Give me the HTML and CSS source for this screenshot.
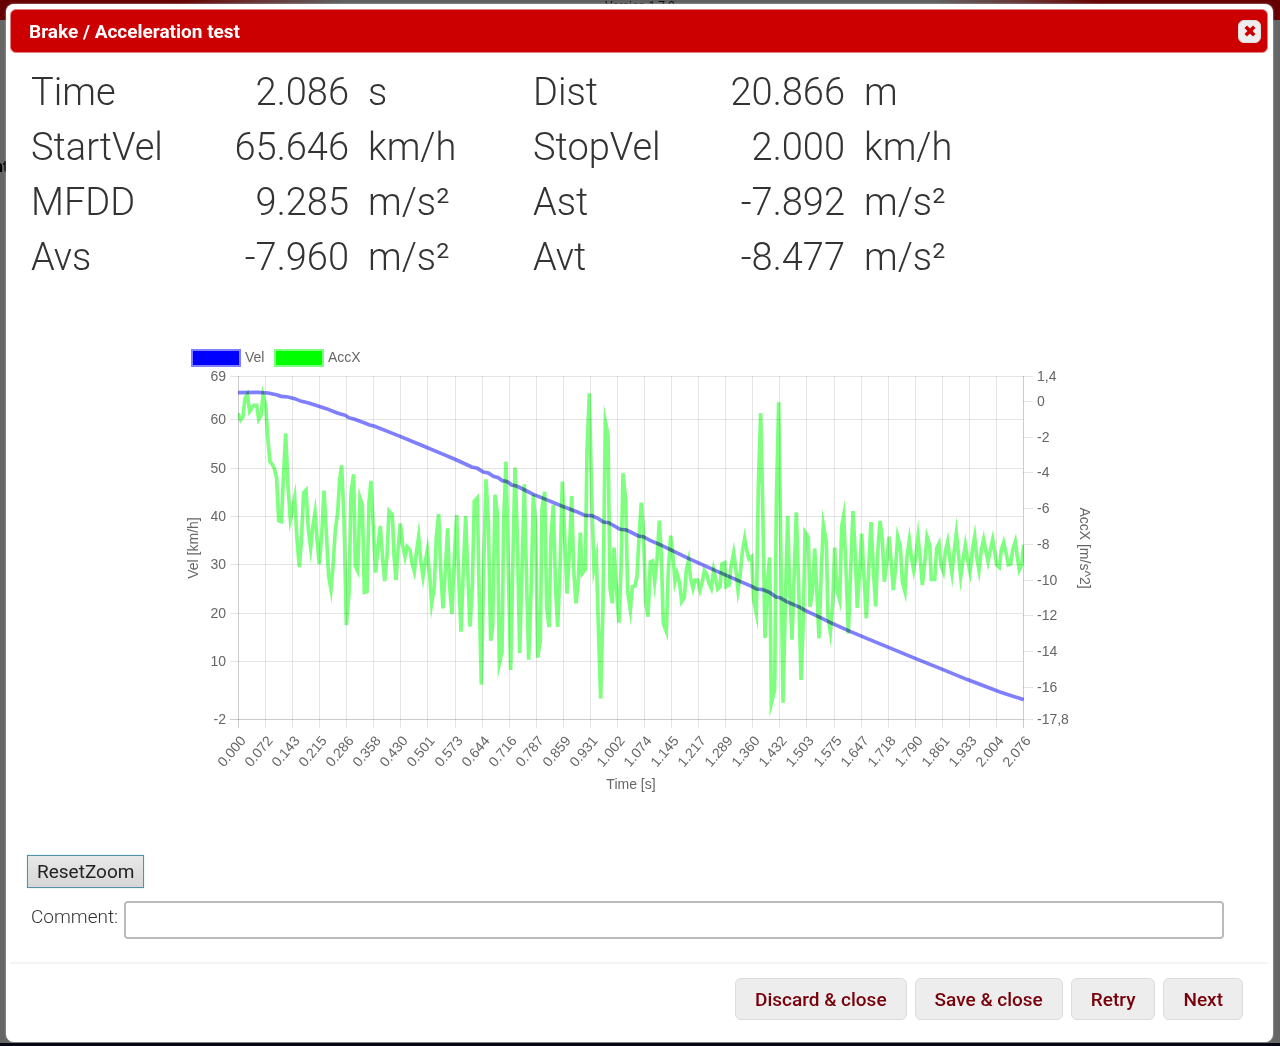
FILE: index.html
```html
<!DOCTYPE html>
<html lang="en">
<head>
  <meta charset="UTF-8">
  <meta name="viewport" content="width=device-width, initial-scale=1.0">
  <title>Brake / Acceleration test</title>
  <link rel="stylesheet" href="styles.css">
</head>
<body>
  <div class="page-header"></div>
  <div class="page-version">Version 1.7.9</div>
  <div class="page-label">nt</div>

  <div class="dialog" role="dialog" aria-labelledby="dialogTitle">
    <div class="titlebar">
      <h1 id="dialogTitle">Brake / Acceleration test</h1>
      <button class="close" aria-label="Close">
        <svg width="12" height="12" viewBox="0 0 12 12"><path d="M3 3L9 9M9 3L3 9" stroke="#c00" stroke-width="3.6" stroke-linecap="square"/></svg>
      </button>
    </div>

    <div class="content">
      <table class="results">
        <tr><th>Time</th><td class="value">2.086</td><td class="unit">s</td><th>Dist</th><td class="value second">20.866</td><td class="unit">m</td></tr>
        <tr><th>StartVel</th><td class="value">65.646</td><td class="unit">km/h</td><th>StopVel</th><td class="value second">2.000</td><td class="unit">km/h</td></tr>
        <tr><th>MFDD</th><td class="value">9.285</td><td class="unit">m/s²</td><th>Ast</th><td class="value second">-7.892</td><td class="unit">m/s²</td></tr>
        <tr><th>Avs</th><td class="value">-7.960</td><td class="unit">m/s²</td><th>Avt</th><td class="value second">-8.477</td><td class="unit">m/s²</td></tr>
      </table>

      <svg class="chart" viewBox="0 0 912 460">
        <!-- legend -->
        <rect x="8" y="10" width="48" height="16" fill="#00f" stroke="#7f7fff" stroke-width="2"/>
        <text x="61" y="22">Vel</text>
        <rect x="91" y="10" width="48" height="16" fill="#0f0" stroke="#7fff7f" stroke-width="2"/>
        <text x="144" y="22">AccX</text>

        <g id="grid"></g>

        <!-- plot area, three units per pixel -->
        <svg x="54" y="36" width="786" height="344" viewBox="0 0 2358 1032">
          <polyline class="line acc" points="0,112 8,132 15,122 21,67 28,56 35,106 42,95 48,88 56,88 62,130 69,118 75,58 83,87 89,182 96,258 102,264 109,277 116,307 122,434 130,437 137,290 143,172 150,330 157,430 163,402 170,365 177,490 184,573 190,495 197,350 204,342 211,460 218,515 224,455 231,410 238,500 244,564 251,480 258,344 265,470 272,600 279,640 285,572 292,462 299,410 305,312 311,268 318,430 325,747 333,650 339,350 347,295 352,570 359,585 366,365 373,387 379,649 387,647 393,380 399,315 405,440 413,590 421,500 427,450 434,550 440,615 447,540 453,405 463,417
            468,537 474,612 480,522 487,442 494,507 501,542 507,512 516,522 522,562 529,587 535,532 542,482 548,552 555,602 561,562 568,522 575,597 581,682 589,632 595,482 602,414 608,582 615,697 622,582 629,457 635,632 642,714 649,542 656,417 662,602 669,767 676,582 683,420 689,582 696,752 703,632 709,376 718,366 723,632 730,926 737,582 744,310 751,432 758,794 764,752 771,356 778,412 784,862 792,827 797,432 804,257 811,582 818,882 824,582 831,275 838,482 845,831 852,582 859,325 865,582 872,851 880,622 886,356 893,452 899,845 907,792 912,397 920,347 926,692 933,753 939,482 946,387 953,642 959,753 966,582 973,317 980,482 987,653 994,532 1001,360 1007,582 1014,682 1021,612 1027,470 1033,592 1042,580 1047,222 1054,52 1061,362 1068,577
            1075,542 1082,782 1088,968 1095,682 1102,137 1110,177 1116,637 1123,682 1128,515 1135,632 1143,740 1149,582 1155,292 1163,372 1169,647 1177,702 1183,632 1191,630 1197,602 1203,482 1210,380 1216,462 1223,677 1230,722 1237,558 1244,555 1250,617 1257,552 1264,434 1270,542 1276,742 1285,767 1291,582 1298,479 1305,542 1311,617 1317,592 1325,622 1331,677 1339,665 1345,582 1352,552 1358,607 1365,637 1371,612 1379,612 1386,642 1393,617 1399,584 1406,594 1413,622 1420,637 1427,582 1433,607 1439,639 1446,632 1452,564 1460,560 1464,632 1473,627 1479,572 1487,530 1494,582 1500,642 1506,602 1513,527 1520,487 1527,527 1533,549 1541,542 1547,672 1555,712 1561,332 1568,111 1574,382 1581,786 1588,622 1595,544 1600,982 1610,942 1615,382 1622,79 1628,482 1635,980 1642,682 1649,420 1655,632 1662,791 1669,582 1675,409
            1682,632 1689,912 1696,732 1701,469 1711,485 1716,692 1723,652 1730,518 1736,632 1743,787 1750,582 1756,447 1765,497 1770,722 1777,768 1784,682 1790,515 1797,642 1805,672 1811,452 1817,419 1824,582 1831,772 1838,582 1845,405 1851,522 1858,696 1865,582 1871,473 1878,602 1885,727 1892,582 1899,438 1906,582 1913,691 1919,532 1926,435 1933,492 1939,617 1946,562 1953,482 1959,552 1966,642 1973,572 1979,482 1987,512 1993,617 2001,647 2007,542 2014,492 2020,542 2027,582 2034,537 2040,482
            2047,552 2053,627 2060,562 2067,482 2075,507 2080,610 2090,610 2096,517 2103,502 2109,567 2116,587 2122,527 2129,497 2136,552 2142,592 2149,522 2155,472 2162,542 2168,602 2175,552 2182,507 2189,552 2196,587 2203,522 2210,482 2216,542 2223,582 2230,522 2237,490 2244,527 2250,557 2257,522 2264,490 2270,527 2276,567 2284,574 2290,522 2297,500 2304,530 2311,567 2318,565 2324,522 2332,497 2338,542 2344,582 2351,567 2357,507"/>
          <polyline class="line vel" points="0,50 60,49 90,51 115,56 130,61 150,63 170,68 190,76 210,80 240,90 265,98 290,108 305,113 322,118 332,125 350,130 380,141 395,147 410,151 456,169 488,182 556,210 616,235 656,252 701,273 718,277 736,288 751,291 766,301 781,305 793,314 808,317 821,327 836,330 866,345 886,355 916,367 971,390 1016,407 1041,418 1061,419 1081,428 1096,438 1112,440 1146,460 1166,462 1201,480 1216,482 1236,493 1266,506 1351,547 1426,581 1506,616 1541,631 1556,639 1574,641 1596,650 1614,663 1626,665 1646,677 1686,694 1701,703 1746,724 1776,739 1831,764 1886,787 1946,812 2046,853 2106,877 2186,910 2286,948 2357,971"/>
        </svg>

        <text x="447" y="449" text-anchor="middle">Time [s]</text>
        <text transform="translate(14 208) rotate(-90)" text-anchor="middle">Vel [km/h]</text>
        <text transform="translate(896 208) rotate(90)" text-anchor="middle">AccX [m/s^2]</text>
      </svg>

      <button class="reset">ResetZoom</button>
      <div class="comment">
        <label for="comment">Comment:</label>
        <input type="text" id="comment">
      </div>
    </div>

    <div class="buttons">
      <button>Discard &amp; close</button>
      <button>Save &amp; close</button>
      <button>Retry</button>
      <button>Next</button>
    </div>
  </div>

  <script>
    const plot = { left: 54, top: 36, right: 839, bottom: 379 };
    const velTicks = [69, 60, 50, 40, 30, 20, 10, -2];
    const accTicks = [1.4, 0, -2, -4, -6, -8, -10, -12, -14, -16, -17.8];
    const timeTicks = 30;
    const timeStep = 0.071588;

    function line(x1, y1, x2, y2, cls) {
      return `<line class="${cls}" x1="${x1}" y1="${y1}" x2="${x2}" y2="${y2}"/>`;
    }

    // Position of a value on a vertical axis
    function scaleY(value, max, min) {
      return Math.round(plot.top + (max - value) / (max - min) * (plot.bottom - plot.top)) + 0.5;
    }

    function drawGrid() {
      let out = "";

      velTicks.forEach(v => {
        const y = scaleY(v, 69, -2);
        out += line(plot.left - 8, y, plot.right, y, v === -2 ? "axis" : "tick");
        out += `<text x="42" y="${y + 4}" text-anchor="end">${v}</text>`;
      });

      accTicks.forEach(v => {
        const y = scaleY(v, 1.4, -17.8);
        out += line(plot.right, y, plot.right + 10, y, "tick");
        out += `<text x="853" y="${y + 4}">${String(v).replace(".", ",")}</text>`;
      });

      for (let i = 0; i < timeTicks; i++) {
        const x = Math.round(plot.left + i * (plot.right - plot.left) / (timeTicks - 1)) + 0.5;
        const edge = i === 0 || i === timeTicks - 1;
        out += line(x, plot.top, x, plot.bottom + 9, edge ? "axis" : "tick");
        out += `<text transform="translate(${x + 8} ${plot.bottom + 22}) rotate(-50)" text-anchor="end">${(i * timeStep).toFixed(3)}</text>`;
      }

      document.getElementById("grid").innerHTML = out;
    }

    drawGrid();
  </script>
</body>
</html>
```
FILE: styles.css
```css
* {
  box-sizing: border-box;
}
body {
  margin: 0;
  min-height: 100vh;
  padding: 4px 7px 1px 6px;
  position: relative;
  overflow: hidden;
  font-family: Roboto, "Liberation Sans", sans-serif;
  color: #333;
  background: #666;
  border-bottom: 3px solid #05060f;
  display: flex;
}
.page-header {
  position: absolute;
  top: 0;
  left: 0;
  right: 0;
  height: 20px;
  background: linear-gradient(90deg, #600 14%, #633 20%, #606060 27%, #606060 73%, #633 80%, #600 86%);
}
.page-version {
  position: absolute;
  top: 0;
  left: 0;
  right: 0;
  text-align: center;
  font-size: 12px;
  line-height: 12px;
  color: #111;
}
.page-label {
  position: absolute;
  top: 157px;
  left: -6px;
  font-size: 16px;
  font-weight: bold;
  color: #000;
}
.dialog {
  position: relative;
  flex: 1;
  display: flex;
  flex-direction: column;
  padding: 5px 5px 5px 4px;
  background: #fff;
  border-radius: 8px;
  box-shadow: 0 0 2px #ccd;
}
.titlebar {
  display: flex;
  align-items: center;
  justify-content: space-between;
  height: 44px;
  padding: 0 6px 0 18px;
  background: #c00;
  border: 1px solid #e08080;
  border-radius: 6px;
}
.titlebar h1 {
  margin: 0;
  font-size: 19px;
  font-weight: 700;
  color: #fff;
}
.close {
  display: flex;
  align-items: center;
  justify-content: center;
  width: 23px;
  height: 23px;
  padding: 0;
  background: #eee;
  border: 1px solid #ddd;
  border-radius: 6px;
}
.content {
  flex: 1;
  display: flex;
  flex-direction: column;
  padding: 12px 44px 23px 17px;
}
.results {
  align-self: flex-start;
  border-collapse: collapse;
  font-size: 38px;
  line-height: 55px;
  font-weight: 300;
}
.results th,
.results td {
  padding: 0;
  font-weight: 300;
  text-align: left;
}
.results th {
  width: 166px;
  padding-left: 4px;
}
.results .value {
  width: 156px;
  text-align: right;
}
.results .second {
  width: 150px;
}
.results .unit {
  width: 180px;
  padding-left: 19px;
}
.chart {
  width: 100%;
  max-width: 912px;
  margin: 55px 0 0 157px;
}
.chart text {
  font-family: "Liberation Sans", Arial, sans-serif;
  font-size: 14px;
  fill: #666;
}
.tick {
  stroke: rgba(0, 0, 0, 0.1);
}
.axis {
  stroke: rgba(0, 0, 0, 0.2);
}
.line {
  fill: none;
  stroke-width: 11;
  stroke-miterlimit: 10;
  mix-blend-mode: multiply;
}
.acc {
  stroke: #7fff7f;
}
.vel {
  stroke: #7f7fff;
}
.reset {
  align-self: flex-start;
  height: 33px;
  margin-top: 55px;
  padding: 0 9px;
  font-family: inherit;
  font-size: 19px;
  font-weight: 400;
  color: #222;
  background: linear-gradient(#e8e8e8, #d6d6d6);
  border: 1px solid #5590a8;
  box-shadow: 0 0 1px #8cd;
}
.comment {
  display: flex;
  gap: 6px;
  margin-top: 13px;
  padding-left: 4px;
  font-size: 19px;
  line-height: 32px;
  font-weight: 300;
}
.comment input {
  flex: 1;
  height: 38px;
  padding: 0 8px;
  font: inherit;
  border: 2px solid #bbb;
  border-radius: 4px;
}
.buttons {
  display: flex;
  justify-content: flex-end;
  gap: 8px;
  padding: 14px 25px 17px;
  border-top: 2px solid #f3f3f3;
}
.buttons button {
  height: 42px;
  padding: 0 19px;
  font-family: inherit;
  font-size: 19px;
  font-weight: 500;
  color: #77000b;
  background: #ededed;
  border: 1px solid #d8dcde;
  border-radius: 6px;
}
```
